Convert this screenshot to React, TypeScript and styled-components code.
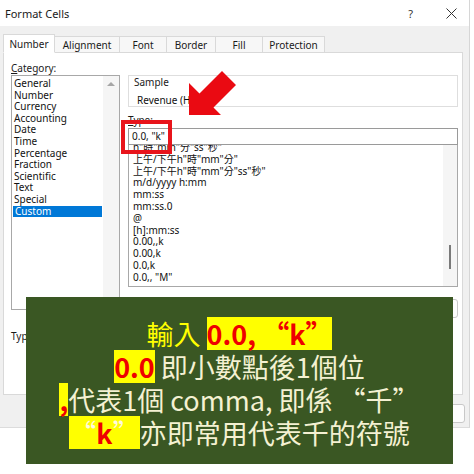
import styled, { createGlobalStyle } from 'styled-components';

const GlobalStyle = createGlobalStyle`
  html, body {
    margin: 0;
    padding: 0;
    background: #ffffff;
  }
  body {
    font-family: "Noto Sans", "Noto Sans CJK TC", sans-serif;
  }
`;

const Page = styled.div`
  position: relative;
  width: 474px;
  height: 474px;
  overflow: hidden;
  background: #ffffff;
`;

const Dialog = styled.div`
  width: 470px;
  height: 428px;
  box-sizing: border-box;
  background: #f0f0f0;
  border-right: 1px solid #d6d6d6;
  border-bottom: 1px solid #dcdcdc;
  display: flex;
  flex-direction: column;
`;

const TitleBar = styled.div`
  height: 26px;
  background: #ffffff;
  display: flex;
  align-items: center;
  padding-left: 5px;
  padding-right: 12px;
`;

const Title = styled.div`
  flex: 1;
  font-size: 11px;
  color: #1a1a1a;
`;

const Help = styled.span`
  font-size: 11px;
  color: #333;
  margin-right: 33px;
`;

const Tabs = styled.div`
  display: flex;
  align-items: flex-end;
  margin-top: 7px;
  padding-left: 3px;
  height: 19px;
`;

const Tab = styled.div<{ $active?: boolean; $w: number }>`
  width: ${(p) => p.$w}px;
  height: ${(p) => (p.$active ? 19 : 17)}px;
  box-sizing: border-box;
  display: flex;
  align-items: center;
  justify-content: center;
  font-size: 10px;
  color: #1a1a1a;
  background: ${(p) => (p.$active ? '#ffffff' : '#f7f7f7')};
  border: 1px solid #d9d9d9;
  border-bottom: ${(p) => (p.$active ? '1px solid #ffffff' : '1px solid #d9d9d9')};
  border-left: ${(p) => (p.$active ? '1px solid #d9d9d9' : 'none')};
  margin-bottom: -1px;
  position: relative;
  z-index: ${(p) => (p.$active ? 1 : 0)};
`;

const Panel = styled.div`
  margin-left: 3px;
  width: 460px;
  height: 343px;
  box-sizing: border-box;
  background: #ffffff;
  border: 1px solid #d9d9d9;
  padding: 8px 4px 0 7px;
`;

const Columns = styled.div`
  display: flex;
  gap: 8px;
`;

const LeftCol = styled.div`
  width: 109px;
  display: flex;
  flex-direction: column;
`;

const RightCol = styled.div`
  width: 330px;
  display: flex;
  flex-direction: column;
  padding-top: 14px;
`;

const FieldLabel = styled.div`
  font-size: 10px;
  line-height: 14px;
  height: 14px;
  color: #1a1a1a;
`;

const ListBox = styled.div<{ $h: number }>`
  height: ${(p) => p.$h}px;
  box-sizing: border-box;
  border: 1px solid #a8a8a8;
  display: flex;
  overflow: hidden;
`;

const Items = styled.div<{ $pt: number }>`
  flex: 1;
  padding: ${(p) => p.$pt}px 1px 0 1px;
  min-width: 0;
`;

const Item = styled.div<{ $selected?: boolean; $lh: number }>`
  font-size: 10px;
  line-height: ${(p) => p.$lh}px;
  height: ${(p) => p.$lh}px;
  padding-left: ${(p) => (p.$selected ? 2 : 1)}px;
  white-space: nowrap;
  color: ${(p) => (p.$selected ? '#ffffff' : '#111')};
  background: ${(p) => (p.$selected ? '#0078d7' : 'transparent')};
`;

const ScrollTrack = styled.div<{ $w: number }>`
  width: ${(p) => p.$w}px;
  background: #f5f5f5;
  display: flex;
  flex-direction: column;
  align-items: center;
`;

const ArrowUp = styled.div`
  margin-top: 6px;
  width: 0;
  height: 0;
  border-left: 4px solid transparent;
  border-right: 4px solid transparent;
  border-bottom: 4px solid #a6a6a6;
`;

const Thumb = styled.div`
  margin-top: 100px;
  width: 2px;
  height: 24px;
  background: #7a7a7a;
`;

const SampleBox = styled.div`
  height: 32px;
  box-sizing: border-box;
  border: 1px solid #dedede;
  padding: 1px 0 0 5px;
`;

const SampleLabel = styled.div`
  font-size: 10px;
  line-height: 11px;
  color: #1a1a1a;
`;

const SampleText = styled.div`
  font-size: 10px;
  line-height: 12px;
  margin-top: 6px;
  padding-left: 3px;
  color: #111;
`;

const TypeLabel = styled(FieldLabel)`
  margin-top: 6px;
  margin-bottom: 1px;
`;

const TypeInput = styled.div`
  height: 17px;
  box-sizing: border-box;
  border: 1px solid #9a9a9a;
  font-size: 10px;
  line-height: 15px;
  padding-left: 3px;
  color: #111;
`;

const FormatList = styled(ListBox)`
  border-top: none;
`;

const FormatItems = styled(Items)`
  margin-top: -3px;
  padding-left: 3px;
`;

const ButtonRow = styled.div<{ $mt: number }>`
  display: flex;
  justify-content: flex-end;
  gap: 6px;
  margin-top: ${(p) => p.$mt}px;
`;

const Button = styled.div`
  width: 76px;
  height: 19px;
  box-sizing: border-box;
  border: 1px solid #c8c8c8;
  border-radius: 3px;
  background: #fdfdfd;
  font-size: 10px;
  display: flex;
  align-items: center;
  justify-content: center;
  color: #1a1a1a;
`;

const Hint = styled.div`
  margin-top: 12px;
  font-size: 10px;
  line-height: 13px;
  color: #1a1a1a;
  white-space: nowrap;
`;

const Footer = styled.div`
  flex: 1;
  display: flex;
  justify-content: flex-end;
  align-items: flex-start;
  gap: 6px;
  padding: 9px 4px 0 0;
`;

const Callout = styled.div`
  position: absolute;
  left: 26px;
  top: 297px;
  width: 427px;
  height: 167px;
  box-sizing: border-box;
  background: #3a5723;
  padding-top: 20px;
  font-family: "Noto Sans CJK TC", "Noto Sans", sans-serif;
  font-size: 27px;
  text-align: center;
  color: #f4f1d2;
`;

const Line = styled.div`
  height: 33px;
  line-height: 33px;
  white-space: nowrap;
`;

const Yellow = styled.span`
  color: #ffff00;
`;

const Mark = styled.span`
  display: inline-block;
  vertical-align: top;
  height: 33px;
  line-height: 33px;
  background: #ffff00;
  color: #ee0000;
  font-weight: 700;
`;

const Pale = styled.span`
  color: #fff9e0;
  font-weight: 400;
`;

const RedFrame = styled.div`
  position: absolute;
  left: 121px;
  top: 120px;
  width: 51px;
  height: 34px;
  box-sizing: border-box;
  border: 4px solid #e8141b;
`;

const ArrowSvg = styled.svg`
  position: absolute;
  left: 0;
  top: 0;
`;

const tabs = [
  { label: 'Number', w: 52 },
  { label: 'Alignment', w: 65 },
  { label: 'Font', w: 47 },
  { label: 'Border', w: 49 },
  { label: 'Fill', w: 47 },
  { label: 'Protection', w: 62 },
];

const categories = [
  'General',
  'Number',
  'Currency',
  'Accounting',
  'Date',
  'Time',
  'Percentage',
  'Fraction',
  'Scientific',
  'Text',
  'Special',
  'Custom',
];

const formats = [
  'h"時"mm"分"ss"秒"',
  '上午/下午h"時"mm"分"',
  '上午/下午h"時"mm"分"ss"秒"',
  'm/d/yyyy h:mm',
  'mm:ss',
  'mm:ss.0',
  '@',
  '[h]:mm:ss',
  '0.00,,k',
  '0.00,k',
  '0.0,k',
  '0.0,, "M"',
];

export default function App() {
  return (
    <Page>
      <GlobalStyle />
      <Dialog>
        <TitleBar>
          <Title>Format Cells</Title>
          <Help>?</Help>
          <svg width="11" height="11" viewBox="0 0 11 11">
            <path d="M0.5 0.5 L10.5 10.5 M10.5 0.5 L0.5 10.5" stroke="#333" strokeWidth="1" />
          </svg>
        </TitleBar>

        <Tabs>
          {tabs.map((t) => (
            <Tab key={t.label} $w={t.w} $active={t.label === 'Number'}>
              {t.label}
            </Tab>
          ))}
        </Tabs>

        <Panel>
          <Columns>
            <LeftCol>
              <FieldLabel>
                <u>C</u>ategory:
              </FieldLabel>
              <ListBox $h={235}>
                <Items $pt={2}>
                  {categories.map((c) => (
                    <Item key={c} $lh={11.6} $selected={c === 'Custom'}>
                      {c}
                    </Item>
                  ))}
                </Items>
                <ScrollTrack $w={16}>
                  <ArrowUp />
                </ScrollTrack>
              </ListBox>
            </LeftCol>

            <RightCol>
              <SampleBox>
                <SampleLabel>Sample</SampleLabel>
                <SampleText>Revenue (HK)</SampleText>
              </SampleBox>
              <TypeLabel>
                <u>T</u>ype:
              </TypeLabel>
              <TypeInput>0.0, "k"</TypeInput>
              <FormatList $h={142}>
                <FormatItems $pt={0}>
                  {formats.map((f) => (
                    <Item key={f} $lh={11.8}>
                      {f}
                    </Item>
                  ))}
                </FormatItems>
                <ScrollTrack $w={14}>
                  <Thumb />
                </ScrollTrack>
              </FormatList>
              <ButtonRow $mt={12}>
                <Button>Delete</Button>
              </ButtonRow>
            </RightCol>
          </Columns>
          <Hint>Type the number format code, using one of the existing codes as a starting point.</Hint>
        </Panel>

        <Footer>
          <Button>OK</Button>
          <Button>Cancel</Button>
        </Footer>
      </Dialog>

      <Callout>
        <Line>
          <Yellow>輸入 </Yellow>
          <Mark>0.0, “k”</Mark>
        </Line>
        <Line>
          <Mark>0.0</Mark> 即小數點後1個位
        </Line>
        <Line>
          <Mark>,</Mark>代表1個 comma, 即係 “千”
        </Line>
        <Line>
          <Mark>
            <Pale>“</Pale>k<Pale>”</Pale>
          </Mark>
          亦即常用代表千的符號
        </Line>
      </Callout>

      <RedFrame />

      <ArrowSvg width="474" height="474" viewBox="0 0 474 474">
        <polygon
          points="189,115 189,83 199.5,93.5 222,71 236,85 213.5,107.5 221,115"
          fill="#ea0a12"
        />
      </ArrowSvg>
    </Page>
  );
}
